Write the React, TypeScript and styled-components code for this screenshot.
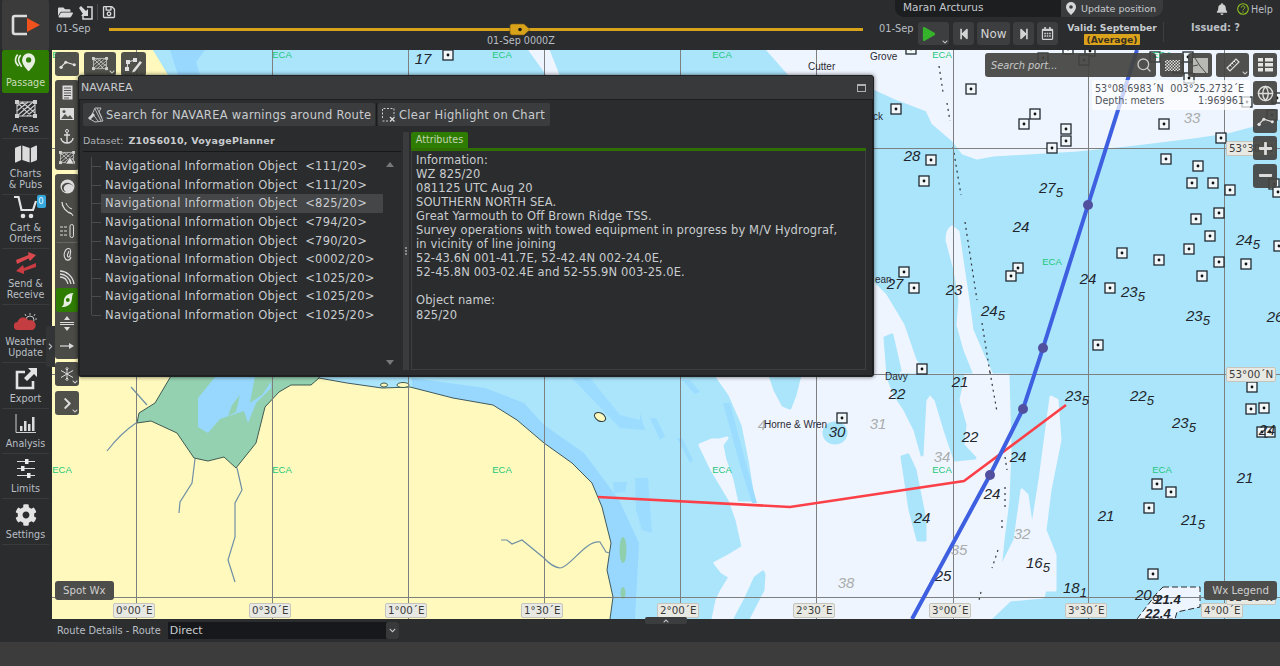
import React from 'react'
import styled, { createGlobalStyle } from 'styled-components'
import { FaCog, FaFolderOpen, FaMap, FaRegSave, FaBell, FaPlay, FaStepBackward, FaStepForward, FaRegCalendarAlt, FaChevronRight, FaChevronDown, FaChevronUp, FaPlus, FaMinus } from 'react-icons/fa'
import { Globe, Search } from 'lucide-react'

const GlobalStyle = createGlobalStyle`
  html, body { margin: 0; padding: 0; background: #3c3c3c; }
  * { box-sizing: border-box; }
  body { font-family: 'DejaVu Sans', Verdana, sans-serif; overflow: hidden; }
`

const Page = styled.div`
  width: 1280px;
  height: 666px;
  display: flex;
  flex-direction: column;
  background: #3c3c3c;
  overflow: hidden;
`
const Shell = styled.div`
  height: 642px;
  display: flex;
`
const Rail = styled.nav`
  position: relative;
  width: 52px;
  flex: none;
  background: #2b2c2e;
  padding: 0 2px 0 2px;
  display: flex;
  flex-direction: column;
  z-index: 5;
`
const LogoBox = styled.div`
  height: 50px;
  background: #3b3b3b;
  border-radius: 2px;
  display: flex;
  align-items: center;
  justify-content: center;
  margin-right: 1px;
`
const RailItem = styled.div<{ $h: number; $active?: boolean }>`
  height: ${p => p.$h}px;
  display: flex;
  flex-direction: column;
  align-items: center;
  justify-content: flex-end;
  padding-bottom: 3.5px;
  margin-right: 1px;
  border-bottom: 1px solid ${p => (p.$active ? 'transparent' : '#3a3b3d')};
  background: ${p => (p.$active ? '#2f7c03' : 'transparent')};
  border-radius: ${p => (p.$active ? '2px' : '0')};
  color: ${p => (p.$active ? '#c9dcb8' : '#b9bfc4')};
  font-size: 9.6px;
  line-height: 11.2px;
  text-align: center;
  white-space: pre-line;
`
const RailIcon = styled.div`
  position: relative;
  height: 25px;
  display: flex;
  align-items: center;
  justify-content: center;
  margin-bottom: 2px;
`
const CartBadge = styled.span`
  position: absolute;
  top: 0;
  right: -7px;
  min-width: 9px;
  height: 13px;
  border-radius: 2px;
  background: #35a9dd;
  color: #e8f6ff;
  font-size: 8.5px;
  line-height: 13px;
  text-align: center;
`
const RailHandle = styled.div`
  position: absolute;
  left: 46px;
  top: 326px;
  width: 9px;
  height: 41px;
  background: #333436;
  border-radius: 2px 0 0 2px;
  color: #b9bfc4;
  font-size: 7px;
  display: flex;
  align-items: center;
  justify-content: center;
`
const Main = styled.div`
  flex: 1;
  min-width: 0;
  display: flex;
  flex-direction: column;
`
const TopBar = styled.header`
  height: 50px;
  flex: none;
  background: #2b2c2e;
  display: flex;
  flex-direction: column;
  color: #b9bfc4;
`
const TopRow = styled.div`
  height: 22px;
  display: flex;
  align-items: flex-start;
`
const FileTools = styled.div`
  display: flex;
  align-items: center;
  gap: 5px;
  padding: 4px 0 0 6px;
  color: #d9d9d9;
  width: 843px;
`
const ToolDivider = styled.span`
  width: 1px;
  height: 16px;
  background: #4a4a4a;
  margin: 0 -1px;
`
const VesselPill = styled.div`
  width: 268px;
  height: 18px;
  margin-top: -1px;
  background: #1d1e20;
  border-radius: 0 0 9px 9px;
  display: flex;
  overflow: hidden;
  font-size: 10.5px;
  line-height: 17px;
  color: #c4c8cc;
`
const VesselName = styled.div`
  flex: 1;
  padding-left: 8px;
`
const UpdatePosition = styled.div`
  width: 102px;
  background: #3a3b3d;
  display: flex;
  align-items: center;
  gap: 5px;
  padding-left: 5px;
  font-size: 9.5px;
  color: #c8ccd0;
`
const HelpArea = styled.div`
  display: flex;
  align-items: center;
  gap: 9px;
  padding: 3px 0 0 53px;
  font-size: 9.6px;
  color: #b9bfc4;
`
const HelpLink = styled.span`
  display: flex;
  align-items: center;
  gap: 2px;
`
const TimeRow = styled.div`
  height: 28px;
  display: flex;
  align-items: flex-start;
  font-size: 9.8px;
`
const DateLabel = styled.span<{ $w: number }>`
  width: ${p => p.$w}px;
  flex: none;
  padding: 1px 0 0 4px;
  line-height: 12px;
  color: #b9bfc4;
`
const Track = styled.div`
  position: relative;
  width: 754px;
  height: 3px;
  margin: 6px 12px 0 0;
  background: #d9a21b;
  flex: none;
`
const TrackThumb = styled.svg`
  position: absolute;
  left: 400px;
  top: -5px;
`
const TrackTime = styled.span`
  position: absolute;
  left: 378px;
  top: 7px;
  font-size: 9.6px;
  line-height: 12px;
  color: #b9bfc4;
  white-space: nowrap;
`
const PlayControls = styled.div`
  display: flex;
  gap: 3px;
  margin-left: 2px;
`
const CtlButton = styled.div<{ $w: number }>`
  width: ${p => p.$w}px;
  height: 23px;
  background: #3d3e40;
  border-radius: 3px;
  display: flex;
  align-items: center;
  justify-content: center;
  color: #d3d3d3;
  font-size: 12px;
`
const PlayButton = styled(CtlButton)`
  justify-content: flex-start;
  padding-left: 4px;
  gap: 5px;
  color: #35b32b;
  position: relative;
  margin-right: 1px;
`
const PlayCaret = styled.span`
  color: #c9c9c9;
  position: absolute;
  right: 1px;
  bottom: 0;
  line-height: 0;
`
const ValidBlock = styled.div`
  width: 105px;
  padding-left: 3px;
  text-align: center;
  font-weight: bold;
  font-size: 9.2px;
  line-height: 12px;
  color: #c6cacd;
`
const AverageTag = styled.div`
  display: inline-block;
  padding: 0 3px;
  height: 11px;
  line-height: 11px;
  border-radius: 1px;
  background: #dba31b;
  color: #3a3020;
  margin-top: -1px;
`
const IssuedBlock = styled.div`
  border-left: 1px solid #3e3f41;
  padding-left: 27px;
  height: 20px;
  font-weight: bold;
  font-size: 9.8px;
  line-height: 12px;
  color: #b9bfc4;
`
const MapArea = styled.div`
  position: relative;
  height: 569px;
  flex: none;
  overflow: hidden;
  background: #aae5fc;
`
const MapDrawing = styled.svg`
  position: absolute;
  inset: 0;
  display: block;
`
const MapName = styled.text<{ $size?: number }>`
  font-family: 'Liberation Sans', Arial, sans-serif;
  font-size: ${p => p.$size ?? 10}px;
  fill: #2b2b33;
`
const EcaLabel = styled.text`
  font-family: 'Liberation Sans', Arial, sans-serif;
  font-size: 9.5px;
  fill: #22c77a;
  text-anchor: middle;
`
const Sounding = styled.text<{ $muted?: boolean; $bold?: boolean }>`
  font-family: 'Liberation Sans', Arial, sans-serif;
  font-style: italic;
  font-weight: ${p => (p.$bold ? 700 : 400)};
  font-size: ${p => (p.$bold ? 13 : 15)}px;
  fill: ${p => (p.$muted ? '#a9adad' : '#22262c')};
  text-anchor: middle;
`
const GridLabel = styled.div<{ $x: number; $y: number }>`
  position: absolute;
  left: ${p => p.$x}px;
  top: ${p => p.$y}px;
  height: 15px;
  padding: 0 2px;
  background: #e9e9e3;
  border: 1px solid #c5c5bd;
  border-radius: 2px;
  color: #3c3c3c;
  font-size: 10.3px;
  line-height: 13px;
  white-space: nowrap;
`
const MapButton = styled.div<{ $w?: number }>`
  position: relative;
  width: ${p => p.$w ?? 24}px;
  height: 24px;
  flex: none;
  background: rgba(68, 68, 66, 0.93);
  border-radius: 3px;
  display: flex;
  align-items: center;
  justify-content: center;
  color: #dcdcdc;
`
const Caret = styled.span`
  position: absolute;
  right: 1px;
  bottom: 1px;
  line-height: 0;
  color: #d6d6d6;
`
const TopTools = styled.div`
  position: absolute;
  top: 3px;
  right: 3px;
  display: flex;
  gap: 4px;
  z-index: 2;
`
const SearchPort = styled.div`
  width: 171px;
  height: 24px;
  background: rgba(68, 68, 66, 0.93);
  border-radius: 3px;
  display: flex;
  align-items: center;
  justify-content: space-between;
  padding: 0 4px 0 6px;
  color: #c9c9c9;
  font-size: 9.8px;
  font-style: italic;
`
const SideTools = styled.div`
  position: absolute;
  top: 31px;
  right: 3px;
  display: flex;
  flex-direction: column;
  gap: 3.5px;
  z-index: 2;
`
const CursorInfo = styled.div`
  position: absolute;
  left: 1040px;
  top: 30px;
  width: 158px;
  height: 30px;
  padding: 3px 6px 0 3px;
  background: rgba(255, 255, 255, 0.72);
  border-radius: 3px;
  color: #50545a;
  font-size: 9.6px;
  line-height: 11.5px;
  white-space: pre;
`
const CursorRow = styled.div`
  display: flex;
  justify-content: space-between;
`
const FloatLabel = styled.div<{ $side: 'left' | 'right' }>`
  position: absolute;
  bottom: 19px;
  ${p => (p.$side === 'left' ? 'left: 3px;' : 'right: 3px;')}
  height: 19px;
  padding: 0 8px;
  background: #4d4d4b;
  border-radius: 3px;
  color: #cfcfcf;
  font-size: 10.2px;
  line-height: 19px;
`
const ChartTools = styled.div`
  position: absolute;
  left: 3px;
  top: 2px;
  width: 24px;
  display: flex;
  flex-direction: column;
  z-index: 2;
`
const ChartRow = styled.div`
  position: relative;
  display: flex;
  gap: 5px;
  height: 24px;
  margin-bottom: 4px;
`
const ToolGroup = styled.div<{ $mb: number }>`
  position: relative;
  width: 24px;
  background: #4a4a46;
  border-radius: 3px;
  display: flex;
  flex-direction: column;
  align-items: center;
  padding: 1px 0;
  margin-bottom: ${p => p.$mb}px;
  color: #d8d8d8;
`
const ToolSlot = styled.div<{ $active?: boolean; $h?: number; $rule?: boolean }>`
  width: 22px;
  height: ${p => p.$h ?? 22}px;
  flex: none;
  display: flex;
  align-items: center;
  justify-content: center;
  border-radius: 2px;
  background: ${p => (p.$active ? '#2f7c03' : 'transparent')};
  border-bottom: ${p => (p.$rule ? '1px solid #666' : 'none')};
`
const NavWindow = styled.section`
  position: absolute;
  left: 26px;
  top: 25px;
  width: 796px;
  height: 302px;
  background: #38393a;
  border: 1px solid #202122;
  border-radius: 3px;
  box-shadow: 0 0 4px rgba(0, 0, 0, 0.6);
  z-index: 3;
  display: flex;
  flex-direction: column;
`
const WindowTitle = styled.div`
  height: 23px;
  flex: none;
  display: flex;
  align-items: center;
  justify-content: space-between;
  padding: 0 7px 0 2px;
  color: #c9cccf;
  font-size: 11px;
`
const MaxIcon = styled.span`
  width: 9px;
  height: 8px;
  border: 1px solid #b0b0b0;
  border-top-width: 2px;
`
const WindowBody = styled.div`
  flex: 1;
  min-height: 0;
  background: #2b2c2e;
  border: 1px solid #1e1f20;
  display: flex;
  flex-direction: column;
  padding: 3px 6px 5px 3px;
`
const ActionBar = styled.div`
  display: flex;
  align-items: center;
  height: 23px;
  flex: none;
`
const ActionButton = styled.div<{ $w: number; $gap: number }>`
  width: ${p => p.$w}px;
  height: 23px;
  background: #3b3c3e;
  border-radius: 2px;
  display: flex;
  align-items: center;
  gap: ${p => p.$gap}px;
  padding-left: 4px;
  color: #c9cccf;
  font-size: 11.5px;
  letter-spacing: 0.3px;
  white-space: nowrap;
`
const ActionRule = styled.span`
  width: 1px;
  height: 23px;
  background: #1b1b1c;
  margin: 0 1px;
`
const Panes = styled.div`
  flex: 1;
  min-height: 0;
  display: flex;
  margin-top: 6px;
`
const TreePane = styled.div`
  width: 318px;
  flex: none;
  display: flex;
  flex-direction: column;
  position: relative;
`
const DatasetLine = styled.div`
  height: 20px;
  flex: none;
  border-bottom: 1px solid #17181a;
  padding: 3px 0 0 0;
  color: #aeb2b6;
  font-size: 9.5px;
  line-height: 12px;
`
const DatasetName = styled.b`
  color: #c9cccf;
  margin-left: 2px;
  letter-spacing: 0.25px;
`
const Tree = styled.ul`
  list-style: none;
  margin: 5px 0 0 8px;
  padding: 0;
  border-left: 1px solid #4a4b4d;
  height: 158px;
  width: 292px;
`
const TreeRow = styled.li<{ $selected?: boolean }>`
  position: relative;
  height: 18.65px;
  margin-left: 9px;
  padding-left: 4px;
  border-radius: 1px;
  background: ${p => (p.$selected ? '#454648' : 'transparent')};
  color: #c9cccf;
  font-size: 11.5px;
  line-height: 18.6px;
  letter-spacing: 0.28px;
  white-space: pre;
  &::before {
    content: '';
    position: absolute;
    left: -9px;
    top: 9px;
    width: 9px;
    height: 1px;
    background: #4a4b4d;
  }
`
const ScrollArrow = styled.span<{ $pos: 'top' | 'bottom' }>`
  position: absolute;
  right: 7px;
  width: 0;
  height: 0;
  border-left: 4px solid transparent;
  border-right: 4px solid transparent;
  ${p =>
    p.$pos === 'top'
      ? 'top: 30px; border-bottom: 5px solid #77787a;'
      : 'bottom: 5px; border-top: 5px solid #77787a;'}
`
const Splitter = styled.div`
  width: 6px;
  margin: 0 2px 0 2px;
  flex: none;
  background: #3a3b3d;
  display: flex;
  flex-direction: column;
  align-items: center;
  justify-content: center;
  gap: 1px;
`
const SplitDot = styled.i`
  width: 2px;
  height: 2px;
  background: #8a8a8a;
`
const AttrPane = styled.div`
  flex: 1;
  min-width: 0;
  display: flex;
  flex-direction: column;
`
const TabStrip = styled.div`
  height: 19px;
  flex: none;
  border-bottom: 3px solid #2f7003;
`
const Tab = styled.div`
  width: 57px;
  height: 16px;
  background: #2f7c03;
  border-radius: 2px 2px 0 0;
  color: #c3d6b4;
  font-size: 9.6px;
  line-height: 16px;
  text-align: center;
`
const AttrText = styled.div`
  flex: 1;
  border: 1px solid #3e3f41;
  border-top: none;
  padding: 2px 4px;
  color: #c9cccf;
  font-size: 11.5px;
  letter-spacing: 0.12px;
  line-height: 14.05px;
  white-space: pre;
`
const BottomBar = styled.div`
  height: 23px;
  flex: none;
  background: #2c2d2f;
  display: flex;
  align-items: center;
  padding-left: 5px;
  color: #b9bfc4;
  font-size: 9.8px;
  position: relative;
`
const RouteSelect = styled.div`
  width: 231px;
  height: 17px;
  margin-left: 7px;
  background: #17181b;
  color: #c9cccf;
  font-size: 11px;
  line-height: 17px;
  padding-left: 2px;
  display: flex;
  justify-content: space-between;
`
const SelectCaret = styled.span`
  width: 13px;
  height: 17px;
  background: #38393b;
  border-radius: 2px;
  display: flex;
  align-items: center;
  justify-content: center;
`
const PullTab = styled.div`
  position: absolute;
  left: 593px;
  top: -2px;
  width: 42px;
  height: 7px;
  background: #3c3d3f;
  color: #d0d0d0;
  border-radius: 2px;
  display: flex;
  align-items: center;
  justify-content: center;
  z-index: 2;
`

const PassageIcon = () => (
  <svg width="28" height="21" viewBox="0 0 32 24">
    <path d="M19 1.500a7.500 7.500 0 0 1 7.500 7.500c0 4.500-4 9.500-7.500 13-3.500-3.500-7.500-8.500-7.500-13A7.500 7.500 0 0 1 19 1.500z" fill="#e6efe0" />
    <circle cx="19" cy="9" r="3" fill="#2f7c03" />
    <path d="M10 3.500C7.500 6 7 10 8.500 12.500L11 17M6.500 3C3.500 6 3.500 10.500 5 13l2.500 3" fill="none" stroke="#e6efe0" strokeWidth="2" />
  </svg>
)
const HatchBox = ({ size = 22, warn = false }: { size?: number; warn?: boolean }) => (
  <svg width={size} height={size * 0.82} viewBox="0 0 22 18">
    <path d="M2 2h18v14H2z" fill="none" stroke="#cfcfcf" strokeWidth="1" />
    <path d="M2 6l6-4M2 11l11-9M2 16L18 2M7 16L20 5M12 16l8-7M2 2l14 14M7 2l13 11" stroke="#cfcfcf" strokeWidth="1.100" />
    <g fill="#cfcfcf"><rect x="0" y="0" width="4" height="4" /><rect x="18" y="0" width="4" height="4" /><rect x="0" y="14" width="4" height="4" /><rect x="18" y="14" width="4" height="4" /></g>
    {warn && <path d="M15 8l6 10h-12z" fill="#e0e0e0" stroke="#4a4a46" />}
  </svg>
)
const CartIcon = () => (
  <svg width="26" height="25" viewBox="0 0 26 25">
    <path d="M1 2h4.500l3 13h11.500l3-9" fill="none" stroke="#e3e3e3" strokeWidth="2.200" />
    <circle cx="10" cy="21" r="2.300" fill="#e3e3e3" /><circle cx="18" cy="21" r="2.300" fill="#e3e3e3" />
  </svg>
)
const SendIcon = () => (
  <svg width="22" height="24" viewBox="0 0 22 24">
    <path d="M2 12L13.500 6.500L15 9L21 3L13 0L13.500 3L1 8Z" fill="#d8484c" />
    <path d="M21 11L9 16L8 13L1 19L9 22L9 19L21 15Z" fill="#c93c42" />
  </svg>
)
const WeatherIcon = () => (
  <svg width="24" height="22" viewBox="0 0 24 22">
    <g stroke="#c9c9c9" strokeWidth="0.9">
      <path d="M16 2v2M11 3l1 2M21 3l-1 2M23 8h-2" />
    </g>
    <circle cx="16" cy="9" r="4" fill="none" stroke="#c9c9c9" />
    <path d="M4 19a4 4 0 0 1-.5-8 6 6 0 0 1 11-1.500 4.500 4.500 0 0 1 4 9.500z" fill="#c43d41" />
  </svg>
)
const ExportIcon = () => (
  <svg width="24" height="23" viewBox="0 0 24 23">
    <path d="M11 5H3v16h16v-7" fill="none" stroke="#e3e3e3" strokeWidth="2.600" />
    <path d="M14 1h9v9l-3-3-7 7-3-3 7-7z" fill="#e3e3e3" />
  </svg>
)
const AnalysisIcon = () => (
  <svg width="22" height="21" viewBox="0 0 22 21">
    <path d="M1 1v18.500h20" fill="none" stroke="#cfcfcf" />
    <g fill="#dcdcdc"><rect x="5" y="13" width="2.500" height="5" /><rect x="9" y="8" width="2.500" height="10" /><rect x="13" y="11" width="2.500" height="7" /><rect x="17" y="4" width="2.500" height="14" /></g>
  </svg>
)
const LimitsIcon = () => (
  <svg width="18" height="21" viewBox="0 0 18 21">
    <g stroke="#dcdcdc" strokeWidth="1"><path d="M0 3.500h18M0 10.500h18M0 17.500h18" /></g>
    <g fill="#eaeaea"><rect x="8" y="1" width="3.500" height="5" /><rect x="4" y="8" width="3.500" height="5" /><rect x="10" y="15" width="3.500" height="5" /></g>
  </svg>
)
const RouteGlyph = ({ w = 17 }: { w?: number }) => (
  <svg width={w} height={w * 0.7} viewBox="0 0 20 14">
    <path d="M2 11l6-6 10 3" fill="none" stroke="#e0e0e0" strokeWidth="1.400" />
    <circle cx="2.500" cy="11" r="2" fill="#e0e0e0" /><circle cx="8" cy="5" r="1.800" fill="#e0e0e0" /><circle cx="18" cy="8" r="1.800" fill="#e0e0e0" />
  </svg>
)
const RoutePencil = () => (
  <svg width="19" height="17" viewBox="0 0 19 17">
    <path d="M3 13l1-7 7-2" fill="none" stroke="#e0e0e0" />
    <rect x="1" y="11" width="4" height="4" fill="#e0e0e0" /><rect x="2" y="4" width="4" height="4" fill="#e0e0e0" /><rect x="9" y="2" width="4" height="4" fill="#e0e0e0" />
    <path d="M9 14l7-9 2 1.500-7 9-3 1z" fill="#e0e0e0" />
  </svg>
)
const DocIcon = () => (
  <svg width="11" height="15" viewBox="0 0 11 15">
    <rect x="0.500" y="0.500" width="10" height="14" fill="#dcdcdc" />
    <path d="M2 3h7M2 5.500h7M2 8h7M2 10.500h7M2 13h5" stroke="#555" />
  </svg>
)
const PhotoIcon = () => (
  <svg width="14" height="12" viewBox="0 0 14 12">
    <rect width="14" height="12" fill="#dcdcdc" />
    <path d="M1 11l4-5 3 3 2-2 3 4z" fill="#55554f" /><circle cx="4" cy="3.500" r="1.500" fill="#55554f" />
  </svg>
)
const AnchorIcon = () => (
  <svg width="14" height="15" viewBox="0 0 14 15">
    <circle cx="7" cy="2" r="1.500" fill="none" stroke="#dcdcdc" />
    <path d="M7 3.500V14M4 6h6M1 9c0 3 3 5 6 5s6-2 6-5" fill="none" stroke="#dcdcdc" strokeWidth="1.400" />
  </svg>
)
const SwirlIcon = () => (
  <svg width="15" height="15" viewBox="0 0 15 15">
    <circle cx="7.500" cy="7.500" r="7" fill="#dcdcdc" />
    <path d="M14 8C11 4 6 4 4 8c-.8 2 .5 4 2 5-3-.2-4.500-3-4-6 2-4 8-5 12 1z" fill="#4a4a46" />
  </svg>
)
const CurveIcon = () => (
  <svg width="14" height="15" viewBox="0 0 14 15">
    <path d="M2 1c0 5 4 10 10 12" fill="none" stroke="#dcdcdc" strokeWidth="1.300" />
    <path d="M6 2c1 3 3 5 6 6M9 11l3 2 1 2" fill="none" stroke="#dcdcdc" />
  </svg>
)
const WindBars = () => (
  <svg width="14" height="14" viewBox="0 0 14 14">
    <path d="M0 3h8M0 7h8M0 11h8" stroke="#dcdcdc" strokeDasharray="3 1" />
    <rect x="10" y="0.500" width="3.500" height="13" rx="1.700" fill="none" stroke="#dcdcdc" />
  </svg>
)
const PaperclipIcon = () => (
  <svg width="11" height="15" viewBox="0 0 11 15">
    <path d="M3 11c-2-3 0-9 3-9.500s3 3 2 7c-.6 2.500-3 2-2.500-1L7 4" fill="none" stroke="#dcdcdc" strokeWidth="1.100" />
    <path d="M3 11c1 3 5 3 6-1" fill="none" stroke="#dcdcdc" strokeWidth="1.100" />
  </svg>
)
const SwellIcon = () => (
  <svg width="15" height="14" viewBox="0 0 15 14">
    <path d="M0 1c6 0 13 5 14 13M0 4c5 0 10 4 11 10M0 7c4 0 7 3 8 7" fill="none" stroke="#dcdcdc" strokeWidth="1.300" />
  </svg>
)
const CycloneIcon = () => (
  <svg width="15" height="16" viewBox="0 0 14 16">
    <path d="M13 1C8 1 4 4 3.500 8C3 11 4 13 1 15C6 15 10 13 11 9C12 6 11 4 13 1Z" fill="#e8efe2" />
    <circle cx="7.300" cy="8" r="1.900" fill="#2f7c03" />
  </svg>
)
const TideIcon = () => (
  <svg width="14" height="15" viewBox="0 0 14 15">
    <path d="M7 0l3 4H4zM7 15l-3-4h6z" fill="#dcdcdc" /><path d="M0 6.500h14M0 8.500h14" stroke="#dcdcdc" />
  </svg>
)
const ArrowGlyph = () => (
  <svg width="14" height="8" viewBox="0 0 14 8">
    <path d="M0 4h11" stroke="#dcdcdc" strokeWidth="1.200" /><path d="M9 1l5 3-5 3z" fill="#dcdcdc" />
  </svg>
)
const SnowIcon = () => (
  <svg width="14" height="14" viewBox="0 0 14 14">
    <path d="M7 0v14M1 3.500l12 7M13 3.500l-12 7M5.500 1.500L7 3l1.500-1.500M5.500 12.500L7 11l1.500 1.500" fill="none" stroke="#dcdcdc" />
  </svg>
)
const ImportIcon = () => (
  <svg width="15" height="15" viewBox="0 0 15 15">
    <path d="M9 2h5v12H5V9" fill="none" stroke="#d9d9d9" strokeWidth="1.500" />
    <path d="M1 3l2-2 5 5 2-2v7H3l2-2z" fill="#d9d9d9" />
  </svg>
)
const PinIcon = () => (
  <svg width="10" height="13" viewBox="0 0 10 13">
    <path d="M5 0a5 5 0 0 1 5 5c0 3-3 6-5 8-2-2-5-5-5-8a5 5 0 0 1 5-5z" fill="#d8d8d8" /><circle cx="5" cy="5" r="1.800" fill="#3a3b3d" />
  </svg>
)
const HelpIcon = () => (
  <svg width="12" height="12" viewBox="0 0 12 12">
    <circle cx="6" cy="6" r="5.300" fill="none" stroke="#8fc31f" strokeWidth="1.100" />
    <path d="M4.300 4.600c0-2.200 3.500-2.200 3.500 0 0 1.300-1.800 1.300-1.800 2.700" fill="none" stroke="#8fc31f" />
    <circle cx="6" cy="9" r=".7" fill="#8fc31f" />
  </svg>
)
const ClearIcon = () => (
  <svg width="14" height="14" viewBox="0 0 14 14">
    <path d="M.5 10V.5H12V8M6 13H.5v-1" fill="none" stroke="#c9cccf" strokeDasharray="2 1.500" />
    <path d="M8 9l4.500 4.500M12.500 9L8 13.500" stroke="#dcdcdc" strokeWidth="1.300" />
  </svg>
)
const SearchRouteIcon = () => (
  <svg width="18" height="16" viewBox="0 0 18 16">
    <path d="M8 1h6l-2 4 4 9-8 1-5-3z" fill="none" stroke="#bdbdbd" />
    <path d="M8 2l6 12M5 6l6 8M10 1l5 10" stroke="#bdbdbd" />
    <path d="M1 11l5-5 2 2-5 5z" fill="#d0d0d0" />
  </svg>
)
const HatchGrid = () => (
  <svg width="15" height="15" viewBox="0 0 15 15">
    <defs>
      <pattern id="chk" width="3" height="3" patternUnits="userSpaceOnUse"><rect width="1.500" height="1.500" fill="#e0e0e0" /><rect x="1.500" y="1.500" width="1.500" height="1.500" fill="#e0e0e0" /></pattern>
    </defs>
    <rect y="2" width="15" height="11" fill="url(#chk)" />
  </svg>
)
const ChartThumb = () => (
  <svg width="15" height="15" viewBox="0 0 15 15">
    <rect width="15" height="15" fill="#b8b8b4" />
    <path d="M2 0l5 8 6 7M0 8l5-1" stroke="#4d4d4b" fill="none" />
  </svg>
)
const RulerIcon = () => (
  <svg width="14" height="14" viewBox="0 0 14 14">
    <path d="M1 10L10 1l3 3-9 9z" fill="none" stroke="#e0e0e0" strokeWidth="1.200" />
    <path d="M4 7l1.500 1.500M6 5l1.500 1.500M8 3l1.500 1.500" stroke="#e0e0e0" />
  </svg>
)
const ListIcon = () => (
  <svg width="15" height="14" viewBox="0 0 15 14">
    <g fill="#e4e4e4"><rect width="5" height="3.500" /><rect x="7" width="8" height="3.500" /><rect y="5" width="5" height="3.500" /><rect x="7" y="5" width="8" height="3.500" /><rect y="10" width="5" height="3.500" /><rect x="7" y="10" width="8" height="3.500" /></g>
  </svg>
)

const railItems: { h: number; label: string; icon: React.ReactNode; active?: boolean; badge?: boolean }[] = [
  { h: 43, label: 'Passage', icon: <PassageIcon />, active: true },
  { h: 46, label: 'Areas', icon: <HatchBox /> },
  { h: 56, label: 'Charts\n& Pubs', icon: <FaMap size={22} color="#dcdcdc" /> },
  { h: 54, label: 'Cart &\nOrders', icon: <CartIcon />, badge: true },
  { h: 56, label: 'Send &\nReceive', icon: <SendIcon /> },
  { h: 58, label: 'Weather\nUpdate', icon: <WeatherIcon /> },
  { h: 46, label: 'Export', icon: <ExportIcon /> },
  { h: 45, label: 'Analysis', icon: <AnalysisIcon /> },
  { h: 45, label: 'Limits', icon: <LimitsIcon /> },
  { h: 46, label: 'Settings', icon: <FaCog size={22} color="#e3e3e3" /> },
]

const warnings = ['111/20', '111/20', '825/20', '794/20', '790/20', '0002/20', '1025/20', '1025/20', '1025/20']

const attributeText = `Information:
WZ 825/20
081125 UTC Aug 20
SOUTHERN NORTH SEA.
Great Yarmouth to Off Brown Ridge TSS.
Survey operations with towed equipment in progress by M/V Hydrograf,
in vicinity of line joining
52-43.6N 001-41.7E, 52-42.4N 002-24.0E,
52-45.8N 003-02.4E and 52-55.9N 003-25.0E.

Object name:
825/20`

const gridX = [136, 272, 408, 544, 680, 816, 953, 1088, 1224]
const gridY = [148, 374, 597]

const lonLabels: [string, number][] = [
  ['0°00´E', 61], ['0°30´E', 197], ['1°00´E', 333], ['1°30´E', 469], ['2°00´E', 605],
  ['2°30´E', 741], ['3°00´E', 877], ['3°30´E', 1013], ['4°00´E', 1149],
]

// x, y of every wreck marker, in page pixels
const wrecks: [number, number][] = [
  [448, 55], [911, 49], [1068, 49], [1090, 51], [1084, 60], [1043, 58], [1155, 57], [1188, 57], [1189, 78], [1178, 68],
  [1247, 102], [1272, 115], [1277, 98], [971, 89], [896, 109], [1035, 114], [1024, 124], [1066, 129], [1066, 141],
  [1052, 148], [1164, 124], [1221, 138], [931, 160], [924, 181], [1166, 159], [1198, 166], [1192, 183], [1213, 183],
  [1230, 190], [1219, 213], [1196, 219], [1210, 236], [1189, 249], [1122, 253], [1159, 260], [1219, 262], [1246, 264],
  [1018, 268], [1011, 276], [1202, 276], [904, 272], [914, 288], [1110, 288], [1098, 345], [922, 369], [1274, 184],
  [1278, 192], [1279, 246], [1252, 387], [1251, 409], [1264, 408], [1262, 432], [1270, 432], [1157, 484], [1171, 492],
  [1149, 508], [1153, 574], [842, 418],
]

// x, y, depth, subscript, style
const soundings: [number, number, string, string?, ('muted' | 'bold')?][] = [
  [423, 64, '17'], [912, 161, '28'], [1051, 193, '27', '5'], [1021, 232, '24'], [1248, 245, '24', '5'],
  [1088, 284, '24'], [895, 289, '27'], [954, 295, '23'], [993, 316, '24', '5'], [1133, 297, '23', '5'],
  [1198, 321, '23', '5'], [1275, 322, '26'], [1192, 123, '33', undefined, 'muted'], [960, 387, '21'], [897, 399, '22'],
  [1077, 401, '23', '5'], [1142, 401, '22', '5'], [1184, 428, '23', '5'], [970, 442, '22'], [1018, 462, '24'],
  [942, 462, '34', undefined, 'muted'], [992, 499, '24'], [1245, 483, '21'], [922, 523, '24'], [1106, 521, '21'],
  [1193, 525, '21', '5'], [1022, 539, '32', undefined, 'muted'], [959, 555, '35', undefined, 'muted'], [1038, 568, '16', '5'],
  [943, 581, '25'], [1075, 593, '18', '1'], [1147, 600, '20', '9'], [1168, 604, '21.4', undefined, 'bold'],
  [1158, 618, '22.4', undefined, 'bold'], [1267, 435, '24'], [878, 429, '31', undefined, 'muted'], [837, 437, '30'],
  [846, 588, '38', undefined, 'muted'], [762, 430, '4', undefined, 'muted'],
]

const ecaLabels: [number, number][] = [
  [62, 57.5], [282, 57.5], [502, 57.5], [722, 57.5], [942, 57.5], [1162, 57.5], [1052, 265],
  [62, 473], [282, 473], [502, 473], [722, 473], [942, 473], [1162, 473],
]

const trackDashes = [
  'M939 66L943 92', 'M947 103L950 121', 'M953 147L961 195', 'M965 222L977 300', 'M982 323L990 373',
  'M990 372L997 412', 'M1005 457L1007 470', 'M1005 487L1005 507', 'M1002 520L1002 530', 'M998 550L992 568', 'M981 592L979 600',
]

const ChartMap = () => (
  <MapDrawing width="1228" height="569" viewBox="52 50 1228 569">
    <rect x="52" y="50" width="1228" height="569" fill="#aae5fc" />
    <path d="M170 50L205 50L196 62L200 75L178 75Z" fill="#98d8ff" />
    {/* pale shallows */}
    <g fill="#eff5ff" stroke="#eff5ff" strokeWidth="3" strokeLinejoin="round">
      <path d="M530 50L548 50L558 75L548 75Z" />
      <path d="M768 50L1280 50L1280 118L1227 132L1193 137L1127 145L1077 150L993 155L977 158L963 153L953 140L933 123L927 110L893 97L873 88L790 75Z" />
      <path d="M952 227Q947 230 947 240L955 270L960 300L958 325L965 350L975 375L992 375L985 360L972 330L968 300L962 260L958 232Z" />
      <path d="M873 283L885 295L903 325L915 360L925 376L873 376Z" />
      <path d="M716 375L1008 375L1010 450L1008 500L1003 540L1000 570L990 590L985 619L713 619L717 600L722 590L730 577L722 572L715 563L730 555L743 547L737 520L730 500L712 470L700 445L712 440L720 440L727 438L722 445L725 460L732 480L737 503L757 503L750 460L743 425L730 395Z" />
      <path d="M1051 397L1057 400L1060 440L1050 490L1045 530L1055 555L1055 590L1045 590L1043 597L1010 600L990 619L980 619L1000 570L1015 540L1022 490L1027 495L1032 530L1040 480Z" />
    </g>
    <g fill="#aae5fc" stroke="#aae5fc" strokeWidth="3" strokeLinejoin="round">
      <path d="M770 375L800 375L795 395L790 408L783 405L775 390Z" />
      <ellipse cx="835" cy="433" rx="11" ry="10" />
      <path d="M887 375L963 375L958 400L965 425L963 445L975 458L955 460L945 430L936 400L930 393L925 400L922 455L915 430L905 410L895 395Z" />
      <path d="M902 457L908 455L915 470L925 520L925 540L918 540L910 510Z" />
      <path d="M885 338L892 335L900 370L895 376L888 376Z" />
      <path d="M763 572L755 578L745 600L735 619L748 619L763 590L764 575Z" />
    </g>
    {/* deeper coastal band */}
    <g fill="#9cdcff">
      <path d="M723 403L730 403L745 460L757 503L752 503L740 465Z" />
      <path d="M572 378L590 378L620 415L640 420L640 413L645 430L620 428Z" />
      <path d="M650 418L656 418L665 436L660 440Z" />
      <path d="M682 380L690 380L700 392L695 394Z" />
      <path d="M677 438L682 438L693 460L690 463Z" />
      <path d="M613 482L627 482L625 492L614 493Z" />
      <path d="M635 478L648 478L652 533L642 530L636 510Z" />
      <path d="M412 378L485 388L524 403L544 425L584 453L619 500L639 543L635 619L412 619Z" fill="#98d8ff" />
    </g>
    <ellipse cx="623" cy="550" rx="3.500" ry="13" fill="#8fcfae" />
    <ellipse cx="623" cy="593" rx="2.500" ry="6" fill="#8fcfae" />
    {/* land */}
    <path d="M52 50L153 50L168 75L168 375L319 378L347 383L382 388L410 387L453 398L493 405L517 420L544 443L572 463L592 483L602 507L611 543L607 570L613 597L610 619L52 619Z" fill="#fff9bd" />
    <path d="M319 378L347 383L382 388L410 387L453 398L493 405L517 420L544 443L572 463L592 483L602 507L611 543L607 570L613 597L610 619" fill="none" stroke="#3f5a60" strokeWidth="1" />
    <path d="M171 376L155 403L139 413L137 423L151 421L177 433L194 458L208 461L224 457L236 468L256 443L265 407L279 392L291 385L311 385L319 378L319 376Z" fill="#94d1b0" stroke="#3f5a50" strokeWidth="1" />
    <path d="M216 376L198 398L198 427L208 433L220 419L244 411L248 423L256 403L271 388L271 376Z" fill="#98d8ff" />
    <path d="M232 405L240 395L236 412L228 416Z" fill="#94d1b0" />
    <path d="M255 376L275 376L262 395L250 403Z" fill="#94d1b0" />
    <ellipse cx="600" cy="417" rx="6" ry="4" transform="rotate(30 600 417)" fill="#fff9bd" stroke="#2f3f44" />
    <ellipse cx="384" cy="385" rx="3.500" ry="2" fill="#fff9bd" stroke="#3f5a50" />
    <ellipse cx="403" cy="385" rx="6" ry="2.500" fill="#fff9bd" stroke="#3f5a50" />
    <g fill="none" stroke="#6f8fa5" strokeWidth="1.200">
      <path d="M131 387L147 405" />
      <path d="M136 423Q121 433 107 451" />
      <path d="M195 459L192 483L180 502L179 513" />
      <path d="M237 468L242 490L235 503L235 537L228 560L235 582" />
      <path d="M501 540L507 540L512 544L522 540L544 558Q552 567 560 568C570 568 585 540 600 542L606 552L610 553" />
    </g>
    {/* sand bank, bottom right */}
    <path d="M1163 587L1200 587L1200 607L1177 612L1175 619L1137 619L1157 593Z" fill="#eff5ff" stroke="#2a2a2a" strokeDasharray="6 3" />
    <g fill="none" stroke="#2e343a" strokeWidth="1.200" strokeDasharray="2 4">
      {trackDashes.map(d => <path key={d} d={d} />)}
    </g>
    {/* graticule */}
    <g stroke="#7d7f80" strokeWidth="1">
      {gridX.map(x => <line key={x} x1={x + 0.5} y1="50" x2={x + 0.5} y2="619" />)}
      {gridY.map(y => <line key={y} x1="52" y1={y + 0.5} x2="1280" y2={y + 0.5} />)}
    </g>
    {wrecks.map(([x, y]) => (
      <g key={`${x}-${y}`}>
        <rect x={x - 5} y={y - 5} width="10" height="10" fill="#f2f7fa" stroke="#1f2a30" strokeWidth="1.300" />
        <circle cx={x} cy={y} r="1.400" fill="#111" />
      </g>
    ))}
    {ecaLabels.map(([x, y]) => <EcaLabel key={`${x}-${y}`} x={x} y={y}>ECA</EcaLabel>)}
    {soundings.map(([x, y, d, sub, kind]) => (
      <Sounding key={`${x}-${y}`} x={x} y={y} $muted={kind === 'muted'} $bold={kind === 'bold'}>
        {d}
        {sub && <tspan dy="4" fontSize="13">{sub}</tspan>}
      </Sounding>
    ))}
    <MapName x="808" y="70">Cutter</MapName>
    <MapName x="870" y="60">Grove</MapName>
    <MapName x="873" y="120">ck</MapName>
    <MapName x="875" y="283">ean</MapName>
    <MapName x="885" y="380">Davy</MapName>
    <MapName x="764" y="428">Horne &amp; Wren</MapName>
    {/* planned route and the warning line */}
    <polyline points="598,497 790,507 964,481 1066,405" fill="none" stroke="#fb4048" strokeWidth="2.600" />
    <polyline points="1137,50 1088,205 1043,348 1023,409 990,475 912,619" fill="none" stroke="#3d5fe0" strokeWidth="4" />
    {[[1088, 205], [1043, 348], [1023, 409], [990, 475]].map(([x, y]) => <circle key={x} cx={x} cy={y} r="5" fill="#51509f" />)}
  </MapDrawing>
)

export default function App() {
  return (
    <Page>
      <GlobalStyle />
      <Shell>
        <Rail>
          <LogoBox>
            <svg width="32" height="24" viewBox="0 0 32 24">
              <path d="M17 3H5a2 2 0 0 0-2 2v14a2 2 0 0 0 2 2h12" fill="none" stroke="#dcdcdc" strokeWidth="2.600" />
              <path d="M17 5l13 7-13 7z" fill="#f0521d" />
            </svg>
          </LogoBox>
          {railItems.map(item => (
            <RailItem key={item.label} $h={item.h} $active={item.active}>
              <RailIcon>
                {item.icon}
                {item.badge && <CartBadge>0</CartBadge>}
              </RailIcon>
              {item.label}
            </RailItem>
          ))}
          <RailHandle><FaChevronRight /></RailHandle>
        </Rail>
        <Main>
          <TopBar>
            <TopRow>
              <FileTools>
                <FaFolderOpen size={15} />
                <ImportIcon />
                <ToolDivider />
                <FaRegSave size={14} />
              </FileTools>
              <VesselPill>
                <VesselName>Maran Arcturus</VesselName>
                <UpdatePosition><PinIcon />Update position</UpdatePosition>
              </VesselPill>
              <HelpArea>
                <FaBell size={12} color="#d0d0d0" />
                <HelpLink><HelpIcon />Help</HelpLink>
              </HelpArea>
            </TopRow>
            <TimeRow>
              <DateLabel $w={57}>01-Sep</DateLabel>
              <Track>
                <TrackThumb width="22" height="13" viewBox="0 0 22 13">
                  <path d="M3 1h12l6 5.500-6 5.500H3a2 2 0 0 1-2-2V3a2 2 0 0 1 2-2z" fill="#d9a21b" stroke="#6e5510" strokeWidth=".6" />
                  <circle cx="11" cy="6.500" r="1.800" fill="#1c1c1c" />
                </TrackThumb>
                <TrackTime>01-Sep 0000Z</TrackTime>
              </Track>
              <DateLabel $w={41}>01-Sep</DateLabel>
              <PlayControls>
                <PlayButton $w={31}>
                  <FaPlay size={14} />
                  <PlayCaret><FaChevronDown size={6} /></PlayCaret>
                </PlayButton>
                <CtlButton $w={21}><FaStepBackward size={12} /></CtlButton>
                <CtlButton $w={33}>Now</CtlButton>
                <CtlButton $w={21}><FaStepForward size={12} /></CtlButton>
                <CtlButton $w={21}><FaRegCalendarAlt size={13} /></CtlButton>
              </PlayControls>
              <ValidBlock>
                Valid: September
                <br />
                <AverageTag>(Average)</AverageTag>
              </ValidBlock>
              <IssuedBlock>Issued: ?</IssuedBlock>
            </TimeRow>
          </TopBar>
          <MapArea>
            <ChartMap />
            {lonLabels.map(([text, x]) => <GridLabel key={text} $x={x} $y={553}>{text}</GridLabel>)}
            <GridLabel $x={1174} $y={91}>53°30´N</GridLabel>
            <GridLabel $x={1174} $y={317}>53°00´N</GridLabel>
            <GridLabel $x={1174} $y={540}>52°30´N</GridLabel>
            <CursorInfo>
              <CursorRow><span>53°08.6983´N</span><span>003°25.2732´E</span></CursorRow>
              <CursorRow><span>Depth: meters</span><span>1:969961</span></CursorRow>
            </CursorInfo>
            <TopTools>
              <SearchPort>Search port...<Search size={16} /></SearchPort>
              <MapButton><HatchGrid /></MapButton>
              <MapButton><ChartThumb /></MapButton>
              <MapButton $w={33}><RulerIcon /><Caret><FaChevronDown size={6} /></Caret></MapButton>
              <MapButton><ListIcon /></MapButton>
            </TopTools>
            <SideTools>
              <MapButton><Globe size={17} /></MapButton>
              <MapButton><RouteGlyph /></MapButton>
              <MapButton><FaPlus size={15} /></MapButton>
              <MapButton><FaMinus size={15} /></MapButton>
            </SideTools>
            <FloatLabel $side="left">Spot Wx</FloatLabel>
            <FloatLabel $side="right">Wx Legend</FloatLabel>
            <ChartTools>
              <ChartRow>
                <MapButton $w={24}><RouteGlyph /></MapButton>
                <MapButton $w={32}><HatchBox size={16} /><Caret><FaChevronDown size={6} /></Caret></MapButton>
                <MapButton $w={25}><RoutePencil /></MapButton>
              </ChartRow>
              <ToolGroup $mb={4}>
                <ToolSlot><DocIcon /></ToolSlot>
                <ToolSlot><PhotoIcon /></ToolSlot>
                <ToolSlot><AnchorIcon /></ToolSlot>
                <ToolSlot><HatchBox size={16} warn /></ToolSlot>
              </ToolGroup>
              <ToolGroup $mb={3}>
                <ToolSlot><SwirlIcon /></ToolSlot>
                <ToolSlot><CurveIcon /></ToolSlot>
                <ToolSlot $h={24} $rule><WindBars /></ToolSlot>
                <ToolSlot $h={23}><PaperclipIcon /></ToolSlot>
                <ToolSlot><SwellIcon /></ToolSlot>
                <ToolSlot $h={24} $active><CycloneIcon /></ToolSlot>
                <ToolSlot><TideIcon /></ToolSlot>
                <ToolSlot $h={24}><ArrowGlyph /></ToolSlot>
              </ToolGroup>
              <ToolGroup $mb={5}>
                <ToolSlot><SnowIcon /></ToolSlot>
                <Caret><FaChevronDown size={6} /></Caret>
              </ToolGroup>
              <MapButton><FaChevronRight size={13} /><Caret><FaChevronDown size={6} /></Caret></MapButton>
            </ChartTools>
            <NavWindow>
              <WindowTitle>NAVAREA<MaxIcon /></WindowTitle>
              <WindowBody>
                <ActionBar>
                  <ActionButton $w={292} $gap={1}><SearchRouteIcon />Search for NAVAREA warnings around Route</ActionButton>
                  <ActionRule />
                  <ActionButton $w={172} $gap={3}><ClearIcon />Clear Highlight on Chart</ActionButton>
                </ActionBar>
                <Panes>
                  <TreePane>
                    <DatasetLine>Dataset: <DatasetName>Z10S6010, VoyagePlanner</DatasetName></DatasetLine>
                    <Tree>
                      {warnings.map((w, i) => (
                        <TreeRow key={i} $selected={i === 2}>{`Navigational Information Object  <${w}>`}</TreeRow>
                      ))}
                    </Tree>
                    <ScrollArrow $pos="top" />
                    <ScrollArrow $pos="bottom" />
                  </TreePane>
                  <Splitter><SplitDot /><SplitDot /><SplitDot /></Splitter>
                  <AttrPane>
                    <TabStrip><Tab>Attributes</Tab></TabStrip>
                    <AttrText>{attributeText}</AttrText>
                  </AttrPane>
                </Panes>
              </WindowBody>
            </NavWindow>
          </MapArea>
          <BottomBar>
            Route Details - Route
            <RouteSelect>Direct<SelectCaret><FaChevronDown size={7} /></SelectCaret></RouteSelect>
            <PullTab><FaChevronUp size={6} /></PullTab>
          </BottomBar>
        </Main>
      </Shell>
    </Page>
  )
}
